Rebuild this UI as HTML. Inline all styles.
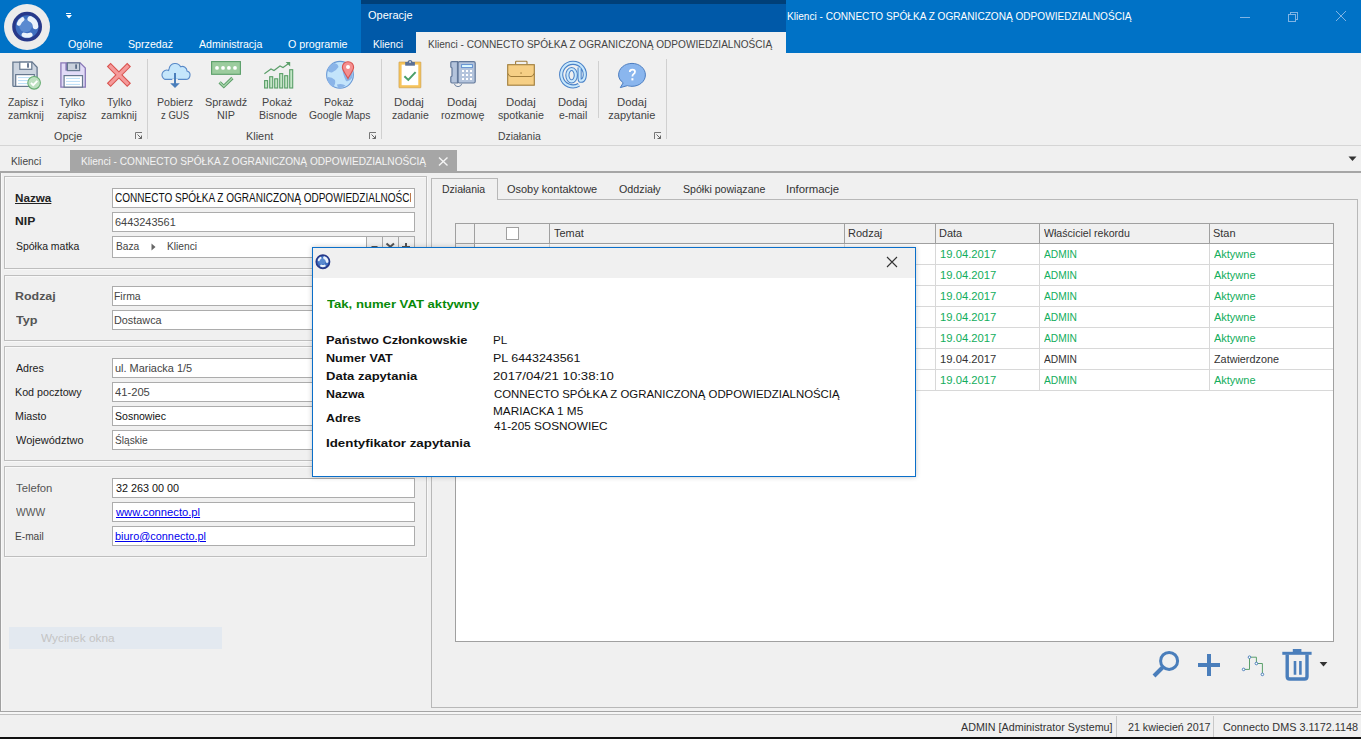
<!DOCTYPE html>
<html><head><meta charset="utf-8"><style>
html,body{margin:0;padding:0;width:1361px;height:739px;overflow:hidden;background:#f0f0f0;position:relative}
.t{position:absolute;white-space:nowrap;line-height:1;font-family:"Liberation Sans",sans-serif;transform-origin:0 0}
</style></head><body>
<div style="position:absolute;left:0px;top:0px;width:1361px;height:53px;background:#0072c6"></div>
<div style="position:absolute;left:361px;top:0px;width:425px;height:53px;background:#0059a8"></div>
<div style="position:absolute;left:361px;top:0px;width:425px;height:4px;background:#003f78"></div>
<div style="position:absolute;left:416px;top:32px;width:370px;height:21px;background:#f0f0f0"></div>
<svg style="position:absolute;left:0;top:0" width="56" height="56"><circle cx="27" cy="27" r="23" fill="#ececec"/><circle cx="27.1" cy="26.7" r="13.20" fill="#3f6fc0" stroke="#27398a" stroke-width="3.40"/><circle cx="25.60" cy="25.70" r="6.50" fill="#5a8ad0"/><path d="M30.25 18.91 A8.4 8.4 0 0 1 35.49 26.41" stroke="#eaf2fb" stroke-width="5.60" stroke-linecap="round" fill="none"/><path d="M30.40 34.86 A8.8 8.8 0 0 1 23.80 34.86" stroke="#eaf2fb" stroke-width="4.60" stroke-linecap="round" fill="none"/><path d="M18.83 23.69 A8.8 8.8 0 0 1 22.44 19.24" stroke="#eaf2fb" stroke-width="4.20" stroke-linecap="round" fill="none"/></svg>
<div style="position:absolute;left:66px;top:13px;width:5px;height:1px;background:#fff"></div>
<svg style="position:absolute;left:65px;top:14px" width="8" height="6"><path d="M1 1 L7 1 L4 4.5Z" fill="#fff"/></svg>
<div class="t" style="left:368.25px;top:10px;font-size:11px;font-weight:normal;color:#fff;transform:scaleX(0.9969);">Operacje</div>
<div class="t" style="left:787.06px;top:11px;font-size:11px;font-weight:normal;color:#fff;transform:scaleX(0.9170);">Klienci - CONNECTO SPÓŁKA Z OGRANICZONĄ ODPOWIEDZIALNOŚCIĄ</div>
<div class="t" style="left:68.27px;top:39px;font-size:11px;font-weight:normal;color:#fff;transform:scaleX(0.9720);">Ogólne</div>
<div class="t" style="left:128.36px;top:39px;font-size:11px;font-weight:normal;color:#fff;transform:scaleX(0.9699);">Sprzedaż</div>
<div class="t" style="left:198.90px;top:39px;font-size:11px;font-weight:normal;color:#fff;transform:scaleX(0.9593);">Administracja</div>
<div class="t" style="left:288.06px;top:39px;font-size:11px;font-weight:normal;color:#fff;transform:scaleX(0.9745);">O programie</div>
<div class="t" style="left:372.95px;top:39px;font-size:11px;font-weight:normal;color:#fff;transform:scaleX(0.9253);">Klienci</div>
<div class="t" style="left:427.96px;top:39px;font-size:11px;font-weight:normal;color:#444;transform:scaleX(0.9159);">Klienci - CONNECTO SPÓŁKA Z OGRANICZONĄ ODPOWIEDZIALNOŚCIĄ</div>
<svg style="position:absolute;left:1230px;top:0" width="131" height="35"><g stroke="#80b4e4" stroke-width="1" fill="none" shape-rendering="crispEdges"><path d="M10 17.5 H20"/><rect x="58.5" y="14.5" width="7" height="7"/><path d="M60.5 14.5 V12.5 H67.5 V19.5 H65.5"/></g><g stroke="#80b4e4" stroke-width="1"><path d="M106 11 L116 21 M116 11 L106 21"/></g></svg>
<div style="position:absolute;left:0px;top:53px;width:1361px;height:92px;background:#f0f0f0"></div>
<div style="position:absolute;left:0px;top:145px;width:1361px;height:1px;background:#d5d5d5"></div>
<div class="t" style="left:8.46px;top:97px;font-size:11px;font-weight:normal;color:#444;transform:scaleX(0.9389);">Zapisz i</div>
<div class="t" style="left:8.36px;top:110px;font-size:11px;font-weight:normal;color:#444;transform:scaleX(0.9580);">zamknij</div>
<div class="t" style="left:58.52px;top:97px;font-size:11px;font-weight:normal;color:#444;transform:scaleX(1.0107);">Tylko</div>
<div class="t" style="left:57.16px;top:110px;font-size:11px;font-weight:normal;color:#444;transform:scaleX(0.9550);">zapisz</div>
<div class="t" style="left:106.74px;top:97px;font-size:11px;font-weight:normal;color:#444;transform:scaleX(0.9545);">Tylko</div>
<div class="t" style="left:101.36px;top:110px;font-size:11px;font-weight:normal;color:#444;transform:scaleX(0.9580);">zamknij</div>
<div class="t" style="left:156.61px;top:97px;font-size:11px;font-weight:normal;color:#444;transform:scaleX(0.9681);">Pobierz</div>
<div class="t" style="left:160.50px;top:110px;font-size:11px;font-weight:normal;color:#444;transform:scaleX(0.8651);">z GUS</div>
<div class="t" style="left:204.85px;top:97px;font-size:11px;font-weight:normal;color:#444;transform:scaleX(0.9880);">Sprawdź</div>
<div class="t" style="left:216.50px;top:110px;font-size:11px;font-weight:normal;color:#444;transform:scaleX(0.9842);">NIP</div>
<div class="t" style="left:262.30px;top:97px;font-size:11px;font-weight:normal;color:#444;transform:scaleX(0.9846);">Pokaż</div>
<div class="t" style="left:258.52px;top:110px;font-size:11px;font-weight:normal;color:#444;transform:scaleX(0.9607);">Bisnode</div>
<div class="t" style="left:324.41px;top:97px;font-size:11px;font-weight:normal;color:#444;transform:scaleX(0.9708);">Pokaż</div>
<div class="t" style="left:309.08px;top:110px;font-size:11px;font-weight:normal;color:#444;transform:scaleX(0.9390);">Google Maps</div>
<div class="t" style="left:394.45px;top:97px;font-size:11px;font-weight:normal;color:#444;transform:scaleX(1.0393);">Dodaj</div>
<div class="t" style="left:391.66px;top:110px;font-size:11px;font-weight:normal;color:#444;transform:scaleX(0.9529);">zadanie</div>
<div class="t" style="left:447.35px;top:97px;font-size:11px;font-weight:normal;color:#444;transform:scaleX(1.0393);">Dodaj</div>
<div class="t" style="left:440.99px;top:110px;font-size:11px;font-weight:normal;color:#444;transform:scaleX(0.9735);">rozmowę</div>
<div class="t" style="left:505.75px;top:97px;font-size:11px;font-weight:normal;color:#444;transform:scaleX(1.0319);">Dodaj</div>
<div class="t" style="left:497.63px;top:110px;font-size:11px;font-weight:normal;color:#444;transform:scaleX(0.9745);">spotkanie</div>
<div class="t" style="left:557.57px;top:97px;font-size:11px;font-weight:normal;color:#444;transform:scaleX(1.0172);">Dodaj</div>
<div class="t" style="left:558.57px;top:110px;font-size:11px;font-weight:normal;color:#444;transform:scaleX(0.9415);">e-mail</div>
<div class="t" style="left:616.65px;top:97px;font-size:11px;font-weight:normal;color:#444;transform:scaleX(1.0319);">Dodaj</div>
<div class="t" style="left:608.34px;top:110px;font-size:11px;font-weight:normal;color:#444;transform:scaleX(1.0000);">zapytanie</div>
<div class="t" style="left:54.16px;top:131px;font-size:11px;font-weight:normal;color:#444;transform:scaleX(0.9829);">Opcje</div>
<div class="t" style="left:246.49px;top:131px;font-size:11px;font-weight:normal;color:#444;transform:scaleX(0.9893);">Klient</div>
<div class="t" style="left:498.13px;top:131px;font-size:11px;font-weight:normal;color:#444;transform:scaleX(0.9444);">Działania</div>
<div style="position:absolute;left:147px;top:59px;width:1px;height:80px;background:#d0d0d0"></div>
<div style="position:absolute;left:381px;top:59px;width:1px;height:80px;background:#d0d0d0"></div>
<div style="position:absolute;left:666px;top:59px;width:1px;height:80px;background:#d0d0d0"></div>
<div style="position:absolute;left:598px;top:61px;width:1px;height:57px;background:#d0d0d0"></div>
<svg style="position:absolute;left:135px;top:132px" width="8" height="8"><path d="M0.5 7 V0.5 H7" stroke="#777" fill="none"/><path d="M2.5 2.5 L6.5 6.5 M3.5 6.5 H6.5 V3.5" stroke="#666" fill="none"/></svg>
<svg style="position:absolute;left:369px;top:132px" width="8" height="8"><path d="M0.5 7 V0.5 H7" stroke="#777" fill="none"/><path d="M2.5 2.5 L6.5 6.5 M3.5 6.5 H6.5 V3.5" stroke="#666" fill="none"/></svg>
<svg style="position:absolute;left:654px;top:132px" width="8" height="8"><path d="M0.5 7 V0.5 H7" stroke="#777" fill="none"/><path d="M2.5 2.5 L6.5 6.5 M3.5 6.5 H6.5 V3.5" stroke="#666" fill="none"/></svg>
<svg style="position:absolute;left:0px;top:0px;overflow:visible" width="1361" height="100">
<path d="M12.9 62.1 H32.2 L37.1 67.2 V85.4 Q37.1 86.4 36.1 86.4 H13.9 Q12.9 86.4 12.9 85.4Z" fill="#cdd5e0" stroke="#66788f" stroke-width="1.3"/>
<rect x="19.8" y="62.1" width="12" height="7.2" fill="#fff" stroke="#66788f" stroke-width="1.2"/>
<rect x="27.1" y="63.2" width="1.8" height="4.5" fill="#5b6d88"/>
<rect x="15.7" y="74.6" width="18.6" height="11.8" fill="#fff" stroke="#66788f" stroke-width="1.2"/>
<path d="M18 77.6 H31 M18 80.6 H31 M18 83.6 H31" stroke="#b9ddf7" stroke-width="1"/>
<circle cx="34.1" cy="82.8" r="6.3" fill="#bde0c0" stroke="#66ad72" stroke-width="1.1"/>
<path d="M31 82.9 L33.2 85.1 L37.3 80.9" stroke="#fff" stroke-width="1.9" fill="none"/>
</svg>
<svg style="position:absolute;left:0px;top:0px;overflow:visible" width="1361" height="100">
<path d="M60.9 62.9 H80.1 L85.3 68.1 V87.1 H60.9Z" fill="#e2dbf7" stroke="#8a78b8" stroke-width="1.3"/>
<rect x="65.4" y="62.9" width="1.9" height="7.7" fill="#8a78b8"/>
<rect x="67.4" y="62.9" width="12.2" height="7.7" fill="#c9d1dc" stroke="#66788f" stroke-width="1.2"/>
<rect x="75.2" y="64.4" width="1.8" height="4.4" fill="#5b6d88"/>
<rect x="64.1" y="75.6" width="18.4" height="11.5" fill="#fff" stroke="#66788f" stroke-width="1.2"/>
<path d="M66 78.4 H80 M66 81.4 H80 M66 84.4 H80" stroke="#b9ddf7" stroke-width="1"/>
</svg>
<svg style="position:absolute;left:0px;top:0px;overflow:visible" width="1361" height="100">
<path d="M108.7 64.7 L129.1 85.1 M129.1 64.7 L108.7 85.1" stroke="#d9534f" stroke-width="5.4"/>
<path d="M109.5 65.5 L128.3 84.3 M128.3 65.5 L109.5 84.3" stroke="#f59a9a" stroke-width="3.2"/>
</svg>
<svg style="position:absolute;left:0px;top:0px;overflow:visible" width="1361" height="100">
<path d="M165 79.4 H185.5 A4.3 4.3 0 0 0 187 71 A4.6 4.6 0 0 0 180.6 66.8 A6.1 6.1 0 0 0 169.2 68.4 L168.6 70.4 A4.6 4.6 0 0 0 165 79.4Z" fill="#c5e6fb" stroke="#5a8ac8" stroke-width="1.1"/>
<rect x="172.3" y="79" width="5.6" height="1.5" fill="#f0f0f0"/>
<rect x="174" y="73" width="2" height="11" fill="#4a7ebb"/>
<path d="M170.2 83.3 H179.8 L175 87.9Z" fill="#4a7ebb"/>
</svg>
<svg style="position:absolute;left:0px;top:0px;overflow:visible" width="1361" height="100">
<rect x="211.6" y="61.6" width="28.8" height="12.7" fill="#9ccc9e" stroke="#5a9e68" stroke-width="1.1"/>
<g fill="#fff"><circle cx="217" cy="67.9" r="1.9"/><circle cx="223" cy="67.9" r="1.9"/><circle cx="228.9" cy="67.9" r="1.9"/><circle cx="235" cy="67.9" r="1.9"/></g>
<path d="M219.6 82.3 L223.8 86.3 L232.4 78" stroke="#5a9e68" stroke-width="3.2" fill="none"/>
<path d="M219.6 82.3 L223.8 86.3 L232.4 78" stroke="#a8d4ab" stroke-width="1.2" fill="none"/>
</svg>
<svg style="position:absolute;left:0px;top:0px;overflow:visible" width="1361" height="100"><rect x="264.6" y="80.6" width="3" height="7.400000000000006" fill="#c5e6c7" stroke="#5a9e68" stroke-width="1.1"/><rect x="269.7" y="76.7" width="3" height="11.299999999999997" fill="#c5e6c7" stroke="#5a9e68" stroke-width="1.1"/><rect x="274.7" y="78.8" width="3" height="9.200000000000003" fill="#c5e6c7" stroke="#5a9e68" stroke-width="1.1"/><rect x="279.7" y="73.6" width="3" height="14.400000000000006" fill="#c5e6c7" stroke="#5a9e68" stroke-width="1.1"/><rect x="284.7" y="75.7" width="3" height="12.299999999999997" fill="#c5e6c7" stroke="#5a9e68" stroke-width="1.1"/><rect x="289.7" y="69.7" width="3" height="18.299999999999997" fill="#c5e6c7" stroke="#5a9e68" stroke-width="1.1"/>
<path d="M264.4 73.8 L271 69 L274 70.5 L280 66 L283 67.5 L289 63.3" stroke="#5a9e68" stroke-width="1.1" fill="none"/>
<path d="M285.6 62 H290.2 V66.4Z" fill="#5a9e68"/>
</svg>
<svg style="position:absolute;left:0px;top:0px;overflow:visible" width="1361" height="100">
<circle cx="340" cy="74.8" r="13.4" fill="#c3e4fb" stroke="#6a9ad6" stroke-width="1.1"/>
<path d="M327.5 70 Q329 65 334 63 Q338 63.5 338.5 67 Q336 71 332 72.5 Q329 73 327.5 70Z M328 77 Q332 77 335 80 Q336 84 333 87 Q329 85 327.5 80Z M342.5 69 Q346 66 351 69 Q353.5 74 352 78 Q349.5 82 346 81 Q344 77 343 73Z M337 84.5 Q342 83 345.5 85.5 Q342 88.5 338 88Z" fill="#8ab4e8"/>
<path d="M348 61.8 C344.5 61.8 342.4 64.4 342.4 67.2 C342.4 70.6 346 74.2 348 78.6 C350 74.2 353.6 70.6 353.6 67.2 C353.6 64.4 351.5 61.8 348 61.8Z" fill="#f58f8f" stroke="#d9534f" stroke-width="1.1"/>
<circle cx="348" cy="67" r="2" fill="#fff"/>
</svg>
<svg style="position:absolute;left:0px;top:0px;overflow:visible" width="1361" height="100">
<rect x="400.3" y="63.3" width="19.3" height="23.2" fill="#fff" stroke="#f6c35a" stroke-width="2.6"/>
<rect x="398.9" y="62" width="22" height="25.8" fill="none" stroke="#c89a4a" stroke-width="0.6" rx="0.5"/>
<rect x="405.2" y="62" width="9.7" height="3.7" fill="#5b7096"/>
<path d="M407.8 62.5 V61.5 Q407.8 60 410 60 Q412.2 60 412.2 61.5 V62.5" fill="#5b7096"/>
<rect x="409.3" y="61.3" width="1.5" height="1.4" fill="#fff"/>
<path d="M404.4 76.2 L408.3 79.9 L415.6 72.1" stroke="#4a9e68" stroke-width="2" fill="none"/>
</svg>
<svg style="position:absolute;left:0px;top:0px;overflow:visible" width="1361" height="100">
<path d="M452 61.6 H457.5 V83 H452 Q450.8 83 450.8 81.8 V77 L452 76 V68 L450.8 67 V62.8 Q450.8 61.6 452 61.6Z" fill="#b4c4dc" stroke="#62789a" stroke-width="1.2"/>
<rect x="458.1" y="61.6" width="17.1" height="21.4" rx="1.5" fill="#b4c4dc" stroke="#62789a" stroke-width="1.2"/>
<rect x="461.6" y="64.6" width="10.8" height="3" fill="#e0fbff" stroke="#5b8ad0" stroke-width="0.9"/>
<g fill="#fff">
<rect x="462" y="70" width="2" height="2"/><rect x="466" y="70" width="2" height="2"/><rect x="470" y="70" width="2" height="2"/>
<rect x="462" y="74" width="2" height="2"/><rect x="466" y="74" width="2" height="2"/><rect x="470" y="74" width="2" height="2"/>
<rect x="462" y="78" width="2" height="2"/><rect x="466" y="78" width="2" height="2"/><rect x="470" y="78" width="2" height="2"/>
</g>
<path d="M454.3 83.8 A3.9 3.9 0 0 0 461.8 83.8" stroke="#62789a" stroke-width="0.9" fill="none"/>
</svg>
<svg style="position:absolute;left:0px;top:0px;overflow:visible" width="1361" height="100">
<path d="M515.6 64.2 V62 Q515.6 61.3 516.3 61.3 H526.3 Q527 61.3 527 62 V64.2" stroke="#a07c3a" stroke-width="1.1" fill="none"/>
<rect x="507.7" y="64.7" width="26.6" height="20.5" fill="#f6cf85" stroke="#a07c3a" stroke-width="1.1"/>
<path d="M508 73.5 Q509 76.5 511 76.5 H531 Q533 76.5 534 73.5" stroke="#a07c3a" stroke-width="1" fill="none"/>
<rect x="520.4" y="72.4" width="1.3" height="1.3" fill="#a07c3a"/>
</svg>
<svg style="position:absolute;left:0px;top:0px;overflow:visible" width="1361" height="100">
<path d="M578.9 84.8 A11.8 11.8 0 1 1 584.4 77.6 Q583.4 81.2 580 80.6 Q579.6 80.4 579.6 78 V67.5" stroke="#4a82c8" stroke-width="4.2" fill="none"/>
<path d="M571.6 69 A4.2 6.2 0 1 0 571.6 81.4 A4.2 6.2 0 1 0 571.6 69Z" stroke="#4a82c8" stroke-width="4.2" fill="none"/>
<path d="M578.9 84.8 A11.8 11.8 0 1 1 584.4 77.6 Q583.4 81.2 580 80.6 Q579.6 80.4 579.6 78 V67.5" stroke="#c8e8fc" stroke-width="2.1" fill="none"/>
<path d="M571.6 69 A4.2 6.2 0 1 0 571.6 81.4 A4.2 6.2 0 1 0 571.6 69Z" stroke="#c8e8fc" stroke-width="2.1" fill="none"/>
</svg>
<svg style="position:absolute;left:0px;top:0px;overflow:visible" width="1361" height="100">
<path d="M632 63.4 C639.5 63.4 645.4 68.5 645.4 74.9 C645.4 81.3 639.5 86.3 632 86.3 C630 86.3 628.5 86 627.5 85.6 L620.3 87.6 L623.2 82.8 C620.2 80.6 618.6 77.9 618.6 74.9 C618.6 68.5 624.5 63.4 632 63.4Z" fill="#8ab6ee" stroke="#4a7cc0" stroke-width="1"/>
<path d="M629.8 72 Q629.8 69.6 632.4 69.6 Q635 69.6 635 71.8 Q635 73.3 633.4 74.2 Q632.4 74.8 632.4 76.4" stroke="#fff" stroke-width="1.8" fill="none"/>
<rect x="631.4" y="78.2" width="2" height="2.2" fill="#fff"/>
</svg>
<div class="t" style="left:10.65px;top:156px;font-size:11px;font-weight:normal;color:#444;transform:scaleX(0.9318);">Klienci</div>
<div style="position:absolute;left:70px;top:150px;width:387px;height:21px;background:#a6a6a6"></div>
<div class="t" style="left:80.66px;top:156px;font-size:11px;font-weight:normal;color:#f4f4f4;transform:scaleX(0.9186);">Klienci - CONNECTO SPÓŁKA Z OGRANICZONĄ ODPOWIEDZIALNOŚCIĄ</div>
<svg style="position:absolute;left:438px;top:157px" width="11" height="10"><path d="M1 0.5 L9.5 8.5 M9.5 0.5 L1 8.5" stroke="#f4f4f4" stroke-width="1.4"/></svg>
<svg style="position:absolute;left:1348px;top:156px" width="10" height="7"><path d="M0.5 0.5 H8.5 L4.5 5Z" fill="#333"/></svg>
<div style="position:absolute;left:0px;top:171px;width:1361px;height:2px;background:#a6a6a6"></div>
<div style="position:absolute;left:0px;top:173px;width:1361px;height:540px;background:#f0f0f0"></div>
<div style="position:absolute;left:0px;top:173px;width:1px;height:539px;background:#a0a0a0"></div>
<div style="position:absolute;left:1px;top:173px;width:1px;height:538px;background:#f8f8f8"></div>
<div style="position:absolute;left:0px;top:711px;width:1361px;height:1px;background:#a5a5a5"></div>
<div style="position:absolute;left:0px;top:712px;width:1361px;height:2px;background:#f6f6f6"></div>
<div style="position:absolute;left:0px;top:714px;width:1361px;height:1px;background:#c0c0c0"></div>
<div style="position:absolute;left:4px;top:176px;width:423px;height:93px;border:1px solid #bebebe;box-sizing:border-box;box-shadow:inset 1px 1px 0 #f8f8f8, 1px 1px 0 #f8f8f8"></div>
<div style="position:absolute;left:4px;top:275px;width:423px;height:66px;border:1px solid #bebebe;box-sizing:border-box;box-shadow:inset 1px 1px 0 #f8f8f8, 1px 1px 0 #f8f8f8"></div>
<div style="position:absolute;left:4px;top:346px;width:423px;height:115px;border:1px solid #bebebe;box-sizing:border-box;box-shadow:inset 1px 1px 0 #f8f8f8, 1px 1px 0 #f8f8f8"></div>
<div style="position:absolute;left:4px;top:466px;width:423px;height:91px;border:1px solid #bebebe;box-sizing:border-box;box-shadow:inset 1px 1px 0 #f8f8f8, 1px 1px 0 #f8f8f8"></div>
<div style="position:absolute;left:112px;top:188px;width:303px;height:20px;background:#fff;border:1px solid #acacac;box-sizing:border-box"></div>
<div style="position:absolute;left:112px;top:212px;width:303px;height:20px;background:#fff;border:1px solid #acacac;box-sizing:border-box"></div>
<div style="position:absolute;left:112px;top:236px;width:303px;height:22px;background:#fff;border:1px solid #acacac;box-sizing:border-box"></div>
<div style="position:absolute;left:112px;top:286px;width:303px;height:20px;background:#fff;border:1px solid #acacac;box-sizing:border-box"></div>
<div style="position:absolute;left:112px;top:310px;width:303px;height:20px;background:#fff;border:1px solid #acacac;box-sizing:border-box"></div>
<div style="position:absolute;left:112px;top:358px;width:303px;height:20px;background:#fff;border:1px solid #acacac;box-sizing:border-box"></div>
<div style="position:absolute;left:112px;top:382px;width:303px;height:20px;background:#fff;border:1px solid #acacac;box-sizing:border-box"></div>
<div style="position:absolute;left:112px;top:406px;width:303px;height:20px;background:#fff;border:1px solid #acacac;box-sizing:border-box"></div>
<div style="position:absolute;left:112px;top:430px;width:303px;height:20px;background:#fff;border:1px solid #acacac;box-sizing:border-box"></div>
<div style="position:absolute;left:112px;top:478px;width:303px;height:20px;background:#fff;border:1px solid #acacac;box-sizing:border-box"></div>
<div style="position:absolute;left:112px;top:502px;width:303px;height:20px;background:#fff;border:1px solid #acacac;box-sizing:border-box"></div>
<div style="position:absolute;left:112px;top:526px;width:303px;height:20px;background:#fff;border:1px solid #acacac;box-sizing:border-box"></div>
<div style="position:absolute;left:367px;top:237px;width:47px;height:20px;background:#f0f0f0"></div>
<div style="position:absolute;left:366px;top:237px;width:1px;height:20px;background:#a8a8a8"></div>
<div style="position:absolute;left:382px;top:237px;width:1px;height:20px;background:#a8a8a8"></div>
<div style="position:absolute;left:398px;top:237px;width:1px;height:20px;background:#a8a8a8"></div>
<svg style="position:absolute;left:366px;top:236px" width="50" height="22"><path d="M5 10 H12 L8.5 13.5Z" fill="#555"/><path d="M20.5 7.5 L28 14 M28 7.5 L20.5 14" stroke="#555" stroke-width="2"/><path d="M40 7 V14 M36 11 H44" stroke="#555" stroke-width="2"/></svg>
<div class="t" style="left:15.32px;top:193px;font-size:11px;font-weight:bold;color:#222;transform:scaleX(1.0612);text-decoration:underline;">Nazwa</div>
<div class="t" style="left:15.19px;top:216px;font-size:11px;font-weight:bold;color:#222;transform:scaleX(1.1025);">NIP</div>
<div class="t" style="left:15.56px;top:241px;font-size:11px;font-weight:normal;color:#222;transform:scaleX(0.9504);">Spółka matka</div>
<div class="t" style="left:15.17px;top:291px;font-size:11px;font-weight:bold;color:#555;transform:scaleX(1.1285);">Rodzaj</div>
<div class="t" style="left:15.89px;top:315px;font-size:11px;font-weight:bold;color:#555;transform:scaleX(1.1515);">Typ</div>
<div class="t" style="left:16.00px;top:363px;font-size:11px;font-weight:normal;color:#222;transform:scaleX(0.9709);">Adres</div>
<div class="t" style="left:15.11px;top:387px;font-size:11px;font-weight:normal;color:#222;transform:scaleX(0.9740);">Kod pocztowy</div>
<div class="t" style="left:15.11px;top:411px;font-size:11px;font-weight:normal;color:#222;transform:scaleX(0.9686);">Miasto</div>
<div class="t" style="left:15.91px;top:435px;font-size:11px;font-weight:normal;color:#222;transform:scaleX(0.9985);">Województwo</div>
<div class="t" style="left:15.72px;top:483px;font-size:11px;font-weight:normal;color:#555;transform:scaleX(1.0242);">Telefon</div>
<div class="t" style="left:15.91px;top:507px;font-size:11px;font-weight:normal;color:#555;transform:scaleX(0.9332);">WWW</div>
<div class="t" style="left:15.16px;top:531px;font-size:11px;font-weight:normal;color:#444;transform:scaleX(0.9215);">E-mail</div>
<div style="position:absolute;left:113px;top:189px;width:298px;height:18px;overflow:hidden">
<div class="t" style="left:2.00px;top:3px;font-size:12px;color:#111;transform:scaleX(0.8354)">CONNECTO SPÓŁKA Z OGRANICZONĄ ODPOWIEDZIALNOŚCIĄ</div></div>
<div class="t" style="left:115.05px;top:217px;font-size:11px;font-weight:normal;color:#444;transform:scaleX(0.9928);">6443243561</div>
<div class="t" style="left:115.75px;top:241px;font-size:11px;font-weight:normal;color:#444;transform:scaleX(0.9256);">Baza</div>
<svg style="position:absolute;left:151px;top:243px" width="6" height="8"><path d="M0.5 0.5 L4.5 4 L0.5 7.5Z" fill="#666"/></svg>
<div class="t" style="left:166.85px;top:241px;font-size:11px;font-weight:normal;color:#444;transform:scaleX(0.9286);">Klienci</div>
<div class="t" style="left:114.43px;top:291px;font-size:11px;font-weight:normal;color:#444;transform:scaleX(0.9477);">Firma</div>
<div class="t" style="left:114.40px;top:315px;font-size:11px;font-weight:normal;color:#444;transform:scaleX(0.9854);">Dostawca</div>
<div class="t" style="left:114.57px;top:363px;font-size:11px;font-weight:normal;color:#444;transform:scaleX(0.9928);">ul. Mariacka 1/5</div>
<div class="t" style="left:115.02px;top:387px;font-size:11px;font-weight:normal;color:#444;transform:scaleX(1.0164);">41-205</div>
<div class="t" style="left:114.86px;top:411px;font-size:11px;font-weight:normal;color:#111;transform:scaleX(0.9574);">Sosnowiec</div>
<div class="t" style="left:114.88px;top:435px;font-size:11px;font-weight:normal;color:#444;transform:scaleX(0.9202);">Śląskie</div>
<div class="t" style="left:115.65px;top:483px;font-size:11px;font-weight:normal;color:#111;transform:scaleX(0.9820);">32 263 00 00</div>
<div class="t" style="left:116.00px;top:507px;font-size:11px;font-weight:normal;color:#0000ee;transform:scaleX(1.0188);text-decoration:underline;">www.connecto.pl</div>
<div class="t" style="left:115.27px;top:531px;font-size:11px;font-weight:normal;color:#0000ee;transform:scaleX(0.9903);text-decoration:underline;">biuro@connecto.pl</div>
<div style="position:absolute;left:9px;top:627px;width:213px;height:22px;background:#e3e9f0"></div>
<div class="t" style="left:41.00px;top:633px;font-size:11px;font-weight:normal;color:#c4c4c4;transform:scaleX(1.0763);">Wycinek okna</div>
<div style="position:absolute;left:431px;top:199px;width:927px;height:509px;border:1px solid #b8b8b8;box-sizing:border-box"></div>
<div style="position:absolute;left:431px;top:178px;width:67px;height:22px;background:#f0f0f0;border:1px solid #b8b8b8;border-bottom:none;box-sizing:border-box"></div>
<div class="t" style="left:441.93px;top:184px;font-size:11px;font-weight:normal;color:#333;transform:scaleX(0.9534);">Działania</div>
<div class="t" style="left:507.35px;top:184px;font-size:11px;font-weight:normal;color:#333;transform:scaleX(0.9970);">Osoby kontaktowe</div>
<div class="t" style="left:619.26px;top:184px;font-size:11px;font-weight:normal;color:#333;transform:scaleX(0.9750);">Oddziały</div>
<div class="t" style="left:683.16px;top:184px;font-size:11px;font-weight:normal;color:#333;transform:scaleX(0.9610);">Spółki powiązane</div>
<div class="t" style="left:786.36px;top:184px;font-size:11px;font-weight:normal;color:#333;transform:scaleX(1.0348);">Informacje</div>
<div style="position:absolute;left:455px;top:223px;width:879px;height:419px;background:#fff;border:1px solid #a0a0a0;box-sizing:border-box"></div>
<div style="position:absolute;left:456px;top:224px;width:877px;height:19px;background:#f0f0f0"></div>
<div style="position:absolute;left:455px;top:243px;width:879px;height:1px;background:#a0a0a0"></div>
<div style="position:absolute;left:474px;top:223px;width:1px;height:20px;background:#a0a0a0"></div>
<div style="position:absolute;left:474px;top:244px;width:1px;height:146px;background:#d8d8d8"></div>
<div style="position:absolute;left:549px;top:223px;width:1px;height:20px;background:#a0a0a0"></div>
<div style="position:absolute;left:549px;top:244px;width:1px;height:146px;background:#d8d8d8"></div>
<div style="position:absolute;left:844px;top:223px;width:1px;height:20px;background:#a0a0a0"></div>
<div style="position:absolute;left:844px;top:244px;width:1px;height:146px;background:#d8d8d8"></div>
<div style="position:absolute;left:935px;top:223px;width:1px;height:20px;background:#a0a0a0"></div>
<div style="position:absolute;left:935px;top:244px;width:1px;height:146px;background:#d8d8d8"></div>
<div style="position:absolute;left:1039px;top:223px;width:1px;height:20px;background:#a0a0a0"></div>
<div style="position:absolute;left:1039px;top:244px;width:1px;height:146px;background:#d8d8d8"></div>
<div style="position:absolute;left:1209px;top:223px;width:1px;height:20px;background:#a0a0a0"></div>
<div style="position:absolute;left:1209px;top:244px;width:1px;height:146px;background:#d8d8d8"></div>
<div style="position:absolute;left:456px;top:244px;width:18px;height:146px;background:#f0f0f0"></div>
<div style="position:absolute;left:474px;top:244px;width:1px;height:146px;background:#a0a0a0"></div>
<div style="position:absolute;left:456px;top:264px;width:877px;height:1px;background:#d8d8d8"></div>
<div style="position:absolute;left:456px;top:285px;width:877px;height:1px;background:#d8d8d8"></div>
<div style="position:absolute;left:456px;top:306px;width:877px;height:1px;background:#d8d8d8"></div>
<div style="position:absolute;left:456px;top:327px;width:877px;height:1px;background:#d8d8d8"></div>
<div style="position:absolute;left:456px;top:348px;width:877px;height:1px;background:#d8d8d8"></div>
<div style="position:absolute;left:456px;top:369px;width:877px;height:1px;background:#d8d8d8"></div>
<div style="position:absolute;left:456px;top:390px;width:877px;height:1px;background:#d8d8d8"></div>
<div style="position:absolute;left:506px;top:227px;width:13px;height:13px;background:#fff;border:1px solid #a0a0a0;box-sizing:border-box"></div>
<div class="t" style="left:553.73px;top:228px;font-size:11px;font-weight:normal;color:#333;transform:scaleX(0.9930);">Temat</div>
<div class="t" style="left:847.58px;top:228px;font-size:11px;font-weight:normal;color:#333;transform:scaleX(1.0020);">Rodzaj</div>
<div class="t" style="left:938.79px;top:228px;font-size:11px;font-weight:normal;color:#333;transform:scaleX(0.9970);">Data</div>
<div class="t" style="left:1043.81px;top:228px;font-size:11px;font-weight:normal;color:#333;transform:scaleX(0.9620);">Właściciel rekordu</div>
<div class="t" style="left:1213.14px;top:228px;font-size:11px;font-weight:normal;color:#333;transform:scaleX(0.9977);">Stan</div>
<div class="t" style="left:939.86px;top:249px;font-size:11px;font-weight:normal;color:#12ad5c;transform:scaleX(1.0239);">19.04.2017</div>
<div class="t" style="left:1044.10px;top:249px;font-size:11px;font-weight:normal;color:#12ad5c;transform:scaleX(0.9289);">ADMIN</div>
<div class="t" style="left:1213.90px;top:249px;font-size:11px;font-weight:normal;color:#12ad5c;transform:scaleX(0.9986);">Aktywne</div>
<div class="t" style="left:939.86px;top:270px;font-size:11px;font-weight:normal;color:#12ad5c;transform:scaleX(1.0239);">19.04.2017</div>
<div class="t" style="left:1044.10px;top:270px;font-size:11px;font-weight:normal;color:#12ad5c;transform:scaleX(0.9289);">ADMIN</div>
<div class="t" style="left:1213.90px;top:270px;font-size:11px;font-weight:normal;color:#12ad5c;transform:scaleX(0.9986);">Aktywne</div>
<div class="t" style="left:939.86px;top:291px;font-size:11px;font-weight:normal;color:#12ad5c;transform:scaleX(1.0239);">19.04.2017</div>
<div class="t" style="left:1044.10px;top:291px;font-size:11px;font-weight:normal;color:#12ad5c;transform:scaleX(0.9289);">ADMIN</div>
<div class="t" style="left:1213.90px;top:291px;font-size:11px;font-weight:normal;color:#12ad5c;transform:scaleX(0.9986);">Aktywne</div>
<div class="t" style="left:939.86px;top:312px;font-size:11px;font-weight:normal;color:#12ad5c;transform:scaleX(1.0239);">19.04.2017</div>
<div class="t" style="left:1044.10px;top:312px;font-size:11px;font-weight:normal;color:#12ad5c;transform:scaleX(0.9289);">ADMIN</div>
<div class="t" style="left:1213.90px;top:312px;font-size:11px;font-weight:normal;color:#12ad5c;transform:scaleX(0.9986);">Aktywne</div>
<div class="t" style="left:939.86px;top:333px;font-size:11px;font-weight:normal;color:#12ad5c;transform:scaleX(1.0239);">19.04.2017</div>
<div class="t" style="left:1044.10px;top:333px;font-size:11px;font-weight:normal;color:#12ad5c;transform:scaleX(0.9289);">ADMIN</div>
<div class="t" style="left:1213.90px;top:333px;font-size:11px;font-weight:normal;color:#12ad5c;transform:scaleX(0.9986);">Aktywne</div>
<div class="t" style="left:939.86px;top:354px;font-size:11px;font-weight:normal;color:#333;transform:scaleX(1.0239);">19.04.2017</div>
<div class="t" style="left:1044.10px;top:354px;font-size:11px;font-weight:normal;color:#333;transform:scaleX(0.9289);">ADMIN</div>
<div class="t" style="left:1213.54px;top:354px;font-size:11px;font-weight:normal;color:#333;transform:scaleX(0.9837);">Zatwierdzone</div>
<div class="t" style="left:939.86px;top:375px;font-size:11px;font-weight:normal;color:#12ad5c;transform:scaleX(1.0239);">19.04.2017</div>
<div class="t" style="left:1044.10px;top:375px;font-size:11px;font-weight:normal;color:#12ad5c;transform:scaleX(0.9289);">ADMIN</div>
<div class="t" style="left:1213.90px;top:375px;font-size:11px;font-weight:normal;color:#12ad5c;transform:scaleX(0.9986);">Aktywne</div>
<svg style="position:absolute;left:1140px;top:640px" width="200" height="50">
<circle cx="29.1" cy="20.9" r="8.5" stroke="#4a7ebb" stroke-width="3" fill="none"/>
<path d="M22.5 27.5 L14 36" stroke="#4a7ebb" stroke-width="4"/>
<path d="M58 25 H80 M69 14 V36" stroke="#4a7ebb" stroke-width="4"/>
<path d="M103.6 29.4 H109.5 V17.2 H116.4 V23.5 H122.4 V34.4" stroke="#5aa06a" stroke-width="1" fill="none"/>
<g fill="#fff" stroke="#4a7ebb" stroke-width="1"><circle cx="103.6" cy="29.4" r="1.3"/><circle cx="109.5" cy="17.2" r="1.3"/><circle cx="116.4" cy="23.5" r="1.3"/><circle cx="122.4" cy="34.4" r="1.3"/></g>
<path d="M142.3 13.3 H171.6" stroke="#4a7ebb" stroke-width="3"/>
<rect x="152.8" y="9" width="8.6" height="4" fill="#4a7ebb"/>
<path d="M147.2 14.5 V36.5 Q147.2 39 149.7 39 H164.5 Q167 39 167 36.5 V14.5" stroke="#4a7ebb" stroke-width="3.4" fill="none"/>
<path d="M155 21 V34.8 M160.4 21 V34.8" stroke="#4a7ebb" stroke-width="2.6"/>
<path d="M179.6 22 H187.4 L183.5 26.4Z" fill="#333"/>
</svg>
<div class="t" style="left:960.80px;top:722px;font-size:11px;font-weight:normal;color:#333;transform:scaleX(0.9763);">ADMIN [Administrator Systemu]</div>
<div style="position:absolute;left:1116px;top:716px;width:1px;height:21px;background:#c8c8c8"></div>
<div class="t" style="left:1127.57px;top:722px;font-size:11px;font-weight:normal;color:#333;transform:scaleX(0.9706);">21 kwiecień 2017</div>
<div style="position:absolute;left:1213px;top:716px;width:1px;height:21px;background:#c8c8c8"></div>
<div class="t" style="left:1223.46px;top:722px;font-size:11px;font-weight:normal;color:#333;transform:scaleX(0.9845);">Connecto DMS 3.1172.1148</div>
<div style="position:absolute;left:0px;top:737px;width:1361px;height:2px;background:#111"></div>
<div style="position:absolute;left:312px;top:247px;width:604px;height:230px;box-shadow:0 0 5px rgba(0,0,0,0.22)"></div>
<div style="position:absolute;left:312px;top:247px;width:604px;height:230px;background:#fff;border:1px solid #0b6fc9;box-sizing:border-box"></div>
<div style="position:absolute;left:313px;top:248px;width:602px;height:30px;background:#f0f0f0"></div>
<svg style="position:absolute;left:0;top:0;overflow:visible" width="1" height="1"><circle cx="322.9" cy="261.7" r="6.60" fill="#3f6fc0" stroke="#27398a" stroke-width="1.70"/><circle cx="322.15" cy="261.20" r="3.25" fill="#5a8ad0"/><path d="M324.47 257.81 A4.2 4.2 0 0 1 327.10 261.55" stroke="#eaf2fb" stroke-width="2.80" stroke-linecap="round" fill="none"/><path d="M324.55 265.78 A4.4 4.4 0 0 1 321.25 265.78" stroke="#eaf2fb" stroke-width="2.30" stroke-linecap="round" fill="none"/><path d="M318.77 260.20 A4.4 4.4 0 0 1 320.57 257.97" stroke="#eaf2fb" stroke-width="2.10" stroke-linecap="round" fill="none"/></svg>
<svg style="position:absolute;left:886px;top:256px" width="12" height="12"><path d="M1 1 L11 11 M11 1 L1 11" stroke="#333" stroke-width="1.1"/></svg>
<div class="t" style="left:326.59px;top:299px;font-size:11px;font-weight:bold;color:#088a08;transform:scaleX(1.1920);">Tak, numer VAT aktywny</div>
<div class="t" style="left:325.84px;top:335px;font-size:11px;font-weight:bold;color:#111;transform:scaleX(1.1684);">Państwo Członkowskie</div>
<div class="t" style="left:325.86px;top:353px;font-size:11px;font-weight:bold;color:#111;transform:scaleX(1.1467);">Numer VAT</div>
<div class="t" style="left:325.83px;top:371px;font-size:11px;font-weight:bold;color:#111;transform:scaleX(1.1851);">Data zapytania</div>
<div class="t" style="left:325.88px;top:389px;font-size:11px;font-weight:bold;color:#111;transform:scaleX(1.1236);">Nazwa</div>
<div class="t" style="left:326.39px;top:413px;font-size:11px;font-weight:bold;color:#111;transform:scaleX(1.1205);">Adres</div>
<div class="t" style="left:325.81px;top:438px;font-size:11px;font-weight:bold;color:#111;transform:scaleX(1.2115);">Identyfikator zapytania</div>
<div class="t" style="left:493.13px;top:335px;font-size:11px;font-weight:normal;color:#111;transform:scaleX(1.0581);">PL</div>
<div class="t" style="left:493.06px;top:353px;font-size:11px;font-weight:normal;color:#111;transform:scaleX(1.1318);">PL 6443243561</div>
<div class="t" style="left:493.44px;top:371px;font-size:11px;font-weight:normal;color:#111;transform:scaleX(1.1970);">2017/04/21 10:38:10</div>
<div class="t" style="left:493.53px;top:389px;font-size:11px;font-weight:normal;color:#111;transform:scaleX(1.0363);">CONNECTO SPÓŁKA Z OGRANICZONĄ ODPOWIEDZIALNOŚCIĄ</div>
<div class="t" style="left:493.12px;top:406px;font-size:11px;font-weight:normal;color:#111;transform:scaleX(1.0692);">MARIACKA 1 M5</div>
<div class="t" style="left:493.80px;top:421px;font-size:11px;font-weight:normal;color:#111;transform:scaleX(1.0747);">41-205 SOSNOWIEC</div>
</body></html>
